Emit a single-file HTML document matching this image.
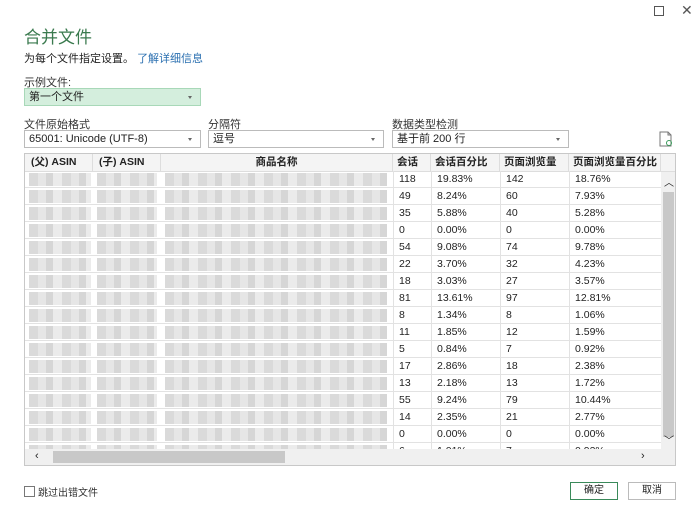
<!DOCTYPE html><html><head><meta charset="utf-8"><style>
body{margin:0;width:700px;height:524px;background:#fff;font-family:"Liberation Sans","Noto Sans CJK SC",sans-serif;position:relative;overflow:hidden;color:#222}
.a{position:absolute}
.sel{position:absolute;height:18px;border:1px solid #bbb;background:#fff;font-size:11px;line-height:16px;padding-left:4px;box-sizing:border-box}
.sel:after{content:"";position:absolute;right:8px;top:7px;border:2.5px solid transparent;border-top:3px solid #666}
.lab{position:absolute;font-size:11px;color:#333}
#tb{position:absolute;left:24px;top:153px;width:652px;height:313px;border:1px solid #c8c8c8;box-sizing:border-box;overflow:hidden}
.hd{position:absolute;top:0;height:18px;background:#f4f4f4;border-right:1px solid #ddd;border-bottom:1px solid #ddd;font-size:10.5px;font-weight:bold;line-height:17px;box-sizing:border-box;white-space:nowrap;overflow:hidden}
.r{position:absolute;left:0;width:636px;height:17px;border-bottom:1px solid #e2e2e2;box-sizing:border-box;font-size:10.5px;line-height:16px;white-space:nowrap}
.c{position:absolute;top:0;height:16px;border-left:1px solid #e2e2e2;padding-left:5px}
.bl{position:absolute;top:2px;height:13px;background:repeating-linear-gradient(90deg,#dadada 0 9px,#e6e6e6 9px 17px,#d6d6d6 17px 24px,#ebebeb 24px 33px)}
.btn{position:absolute;top:482px;height:18px;border:1px solid #bbb;font-size:10px;text-align:center;line-height:16px;box-sizing:border-box;width:48px}
</style></head><body>
<div class="a" style="left:654px;top:6px;width:8px;height:8px;border:1px solid #555"></div>
<div class="a" style="left:681px;top:2px;font-size:14px;color:#555">✕</div>
<div class="a" style="left:24px;top:23px;font-size:17px;color:#3a7a4e">合并文件</div>
<div class="a" style="left:24px;top:50px;font-size:11px">为每个文件指定设置。 <span style="color:#2a6fb0">了解详细信息</span></div>
<div class="lab" style="left:24px;top:74px">示例文件:</div>
<div class="sel" style="left:24px;top:88px;width:177px;background:#d4eedd;border-color:#a8d8b8">第一个文件</div>
<div class="lab" style="left:24px;top:116px">文件原始格式</div>
<div class="sel" style="left:24px;top:130px;width:177px">65001: Unicode (UTF-8)</div>
<div class="lab" style="left:208px;top:116px">分隔符</div>
<div class="sel" style="left:208px;top:130px;width:176px">逗号</div>
<div class="lab" style="left:392px;top:116px">数据类型检测</div>
<div class="sel" style="left:392px;top:130px;width:177px">基于前 200 行</div>
<svg class="a" style="left:659px;top:131px" width="14" height="16"><path d="M1 1h8l3 3v11H1z" fill="none" stroke="#777"/><path d="M9 1v3h3" fill="none" stroke="#777"/><circle cx="10" cy="12" r="2.5" fill="none" stroke="#3a9a5a"/></svg>
<div id="tb">
<div class="hd" style="left:0;width:68px;padding-left:6px">(父) ASIN</div>
<div class="hd" style="left:68px;width:68px;padding-left:6px">(子) ASIN</div>
<div class="hd" style="left:136px;width:232px;text-align:center">商品名称</div>
<div class="hd" style="left:368px;width:38px;padding-left:4px">会话</div>
<div class="hd" style="left:406px;width:69px;padding-left:4px">会话百分比</div>
<div class="hd" style="left:475px;width:69px;padding-left:4px">页面浏览量</div>
<div class="hd" style="left:544px;width:92px;padding-left:4px">页面浏览量百分比</div>
<div class="hd" style="left:636px;width:16px;border-right:0"></div>
<div class="a" style="left:0;top:17px;width:636px;height:278px;overflow:hidden">
<div class="r" style="top:0"><div class="bl" style="left:4px;width:62px"></div><div class="bl" style="left:72px;width:60px"></div><div class="bl" style="left:140px;width:222px"></div><div class="c" style="left:368px">118</div><div class="c" style="left:406px">19.83%</div><div class="c" style="left:475px">142</div><div class="c" style="left:544px">18.76%</div></div>
<div class="r" style="top:17px"><div class="bl" style="left:4px;width:62px"></div><div class="bl" style="left:72px;width:60px"></div><div class="bl" style="left:140px;width:222px"></div><div class="c" style="left:368px">49</div><div class="c" style="left:406px">8.24%</div><div class="c" style="left:475px">60</div><div class="c" style="left:544px">7.93%</div></div>
<div class="r" style="top:34px"><div class="bl" style="left:4px;width:62px"></div><div class="bl" style="left:72px;width:60px"></div><div class="bl" style="left:140px;width:222px"></div><div class="c" style="left:368px">35</div><div class="c" style="left:406px">5.88%</div><div class="c" style="left:475px">40</div><div class="c" style="left:544px">5.28%</div></div>
<div class="r" style="top:51px"><div class="bl" style="left:4px;width:62px"></div><div class="bl" style="left:72px;width:60px"></div><div class="bl" style="left:140px;width:222px"></div><div class="c" style="left:368px">0</div><div class="c" style="left:406px">0.00%</div><div class="c" style="left:475px">0</div><div class="c" style="left:544px">0.00%</div></div>
<div class="r" style="top:68px"><div class="bl" style="left:4px;width:62px"></div><div class="bl" style="left:72px;width:60px"></div><div class="bl" style="left:140px;width:222px"></div><div class="c" style="left:368px">54</div><div class="c" style="left:406px">9.08%</div><div class="c" style="left:475px">74</div><div class="c" style="left:544px">9.78%</div></div>
<div class="r" style="top:85px"><div class="bl" style="left:4px;width:62px"></div><div class="bl" style="left:72px;width:60px"></div><div class="bl" style="left:140px;width:222px"></div><div class="c" style="left:368px">22</div><div class="c" style="left:406px">3.70%</div><div class="c" style="left:475px">32</div><div class="c" style="left:544px">4.23%</div></div>
<div class="r" style="top:102px"><div class="bl" style="left:4px;width:62px"></div><div class="bl" style="left:72px;width:60px"></div><div class="bl" style="left:140px;width:222px"></div><div class="c" style="left:368px">18</div><div class="c" style="left:406px">3.03%</div><div class="c" style="left:475px">27</div><div class="c" style="left:544px">3.57%</div></div>
<div class="r" style="top:119px"><div class="bl" style="left:4px;width:62px"></div><div class="bl" style="left:72px;width:60px"></div><div class="bl" style="left:140px;width:222px"></div><div class="c" style="left:368px">81</div><div class="c" style="left:406px">13.61%</div><div class="c" style="left:475px">97</div><div class="c" style="left:544px">12.81%</div></div>
<div class="r" style="top:136px"><div class="bl" style="left:4px;width:62px"></div><div class="bl" style="left:72px;width:60px"></div><div class="bl" style="left:140px;width:222px"></div><div class="c" style="left:368px">8</div><div class="c" style="left:406px">1.34%</div><div class="c" style="left:475px">8</div><div class="c" style="left:544px">1.06%</div></div>
<div class="r" style="top:153px"><div class="bl" style="left:4px;width:62px"></div><div class="bl" style="left:72px;width:60px"></div><div class="bl" style="left:140px;width:222px"></div><div class="c" style="left:368px">11</div><div class="c" style="left:406px">1.85%</div><div class="c" style="left:475px">12</div><div class="c" style="left:544px">1.59%</div></div>
<div class="r" style="top:170px"><div class="bl" style="left:4px;width:62px"></div><div class="bl" style="left:72px;width:60px"></div><div class="bl" style="left:140px;width:222px"></div><div class="c" style="left:368px">5</div><div class="c" style="left:406px">0.84%</div><div class="c" style="left:475px">7</div><div class="c" style="left:544px">0.92%</div></div>
<div class="r" style="top:187px"><div class="bl" style="left:4px;width:62px"></div><div class="bl" style="left:72px;width:60px"></div><div class="bl" style="left:140px;width:222px"></div><div class="c" style="left:368px">17</div><div class="c" style="left:406px">2.86%</div><div class="c" style="left:475px">18</div><div class="c" style="left:544px">2.38%</div></div>
<div class="r" style="top:204px"><div class="bl" style="left:4px;width:62px"></div><div class="bl" style="left:72px;width:60px"></div><div class="bl" style="left:140px;width:222px"></div><div class="c" style="left:368px">13</div><div class="c" style="left:406px">2.18%</div><div class="c" style="left:475px">13</div><div class="c" style="left:544px">1.72%</div></div>
<div class="r" style="top:221px"><div class="bl" style="left:4px;width:62px"></div><div class="bl" style="left:72px;width:60px"></div><div class="bl" style="left:140px;width:222px"></div><div class="c" style="left:368px">55</div><div class="c" style="left:406px">9.24%</div><div class="c" style="left:475px">79</div><div class="c" style="left:544px">10.44%</div></div>
<div class="r" style="top:238px"><div class="bl" style="left:4px;width:62px"></div><div class="bl" style="left:72px;width:60px"></div><div class="bl" style="left:140px;width:222px"></div><div class="c" style="left:368px">14</div><div class="c" style="left:406px">2.35%</div><div class="c" style="left:475px">21</div><div class="c" style="left:544px">2.77%</div></div>
<div class="r" style="top:255px"><div class="bl" style="left:4px;width:62px"></div><div class="bl" style="left:72px;width:60px"></div><div class="bl" style="left:140px;width:222px"></div><div class="c" style="left:368px">0</div><div class="c" style="left:406px">0.00%</div><div class="c" style="left:475px">0</div><div class="c" style="left:544px">0.00%</div></div>
<div class="r" style="top:272px"><div class="bl" style="left:4px;width:62px"></div><div class="bl" style="left:72px;width:60px"></div><div class="bl" style="left:140px;width:222px"></div><div class="c" style="left:368px">6</div><div class="c" style="left:406px">1.01%</div><div class="c" style="left:475px">7</div><div class="c" style="left:544px">0.92%</div></div>
</div>
<div class="a" style="left:636px;top:18px;width:15px;height:277px;background:#f0f0f0"><div style="position:absolute;left:2px;top:20px;width:11px;height:245px;background:#c8c8c8"></div><div style="position:absolute;left:3px;top:2px;font-size:10px">︿</div><div style="position:absolute;left:3px;top:260px;font-size:10px">﹀</div></div>
<div class="a" style="left:0;top:295px;width:651px;height:17px;background:#f0f0f0"><div style="position:absolute;left:28px;top:2px;width:232px;height:12px;background:#c8c8c8"></div><div style="position:absolute;left:10px;top:1px;font-size:11px">‹</div><div style="position:absolute;left:616px;top:1px;font-size:11px">›</div></div>
</div>
<div class="a" style="left:24px;top:486px;width:9px;height:9px;border:1px solid #777"></div>
<div class="lab" style="left:38px;top:484px;font-size:10px">跳过出错文件</div>
<div class="btn" style="left:570px;border-color:#3a8a5a">确定</div>
<div class="btn" style="left:628px">取消</div>
</body></html>
